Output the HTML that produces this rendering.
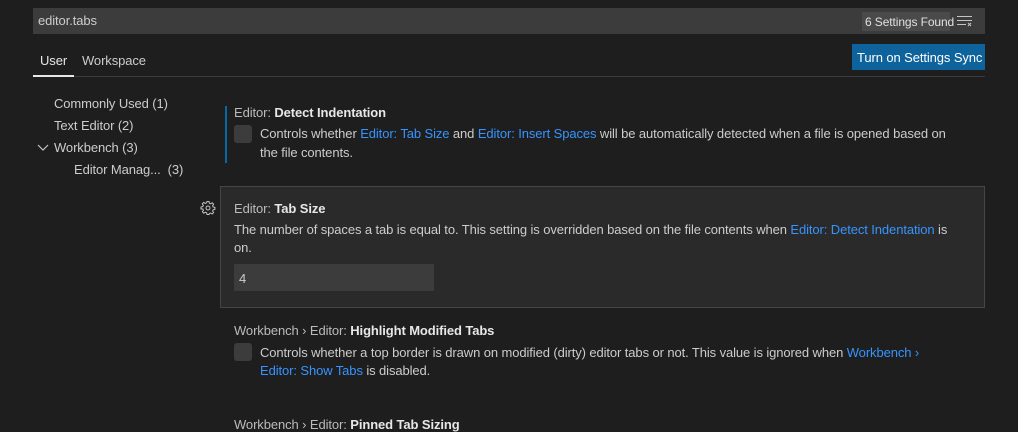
<!DOCTYPE html>
<html><head><style>
*{margin:0;padding:0;box-sizing:border-box}
body{width:1018px;height:422px;background:#1e1e1e;font-family:"Liberation Sans",sans-serif;font-size:13px;color:#cccccc;position:relative;overflow:hidden;letter-spacing:-0.1px}
.a{position:absolute;white-space:nowrap}
.l{color:#3794ff}
b{color:#e7e7e7}
.t{color:#bbbbbb}
.cb{position:absolute;width:18px;height:18px;background:#3c3c3c;border-radius:3px}
</style></head><body>
<div class="a" style="left:33px;top:8px;width:952px;height:26px;background:#3c3c3c"></div>
<div class="a" style="left:38px;top:13px;color:#cccccc">editor.tabs</div>
<div class="a" style="left:862px;top:12px;width:88px;height:19px;background:#4a4a4a"></div>
<div class="a" style="left:865px;top:15px;font-size:12px;color:#e0e0e0">6 Settings Found</div>
<svg class="a" style="left:956px;top:14px" width="18" height="14"><g stroke="#c5c5c5" stroke-width="1"><line x1="1" y1="2.5" x2="16" y2="2.5"/><line x1="1" y1="6.5" x2="16" y2="6.5"/><line x1="1" y1="10.5" x2="10" y2="10.5"/><line x1="12" y1="9" x2="15" y2="12"/><line x1="15" y1="9" x2="12" y2="12"/></g></svg>
<div class="a" style="left:40px;top:53px;color:#e7e7e7">User</div>
<div class="a" style="left:82px;top:53px">Workspace</div>
<div class="a" style="left:33px;top:76px;width:952px;height:1px;background:#3c3c3c"></div>
<div class="a" style="left:33px;top:75px;width:41px;height:2px;background:#e7e7e7"></div>
<div class="a" style="left:852px;top:44px;width:133px;height:26px;background:#0e639c"></div>
<div class="a" style="left:857px;top:50px;color:#fff">Turn on Settings Sync</div>
<div class="a" style="left:54px;top:96px">Commonly Used <span>(1)</span></div>
<div class="a" style="left:54px;top:118px">Text Editor (2)</div>
<svg class="a" style="left:37px;top:143px" width="12" height="10"><path d="M1 2 L6 7 L11 2" stroke="#c5c5c5" fill="none" stroke-width="1.2"/></svg>
<div class="a" style="left:54px;top:140px">Workbench (3)</div>
<div class="a" style="left:74px;top:162px">Editor Manag...&nbsp;&nbsp;(3)</div>

<div class="a" style="left:225px;top:106px;width:2px;height:57px;background:#007acc;opacity:.8"></div>
<div class="a" style="left:234px;top:105px"><span class="t">Editor: </span><b>Detect Indentation</b></div>
<div class="cb" style="left:234px;top:125px"></div>
<div class="a" style="left:260px;top:126px">Controls whether <span class="l">Editor: Tab Size</span> and <span class="l">Editor: Insert Spaces</span> will be automatically detected when a file is opened based on</div>
<div class="a" style="left:260px;top:145px">the file contents.</div>

<div class="a" style="left:220px;top:186px;width:765px;height:122px;background:#2a2a2a;border:1px solid #454545"></div>
<svg class="a" style="left:200px;top:200px" width="16" height="16" viewBox="0 0 16 16"><path d="M7 1.5h2l.4 1.8 1.2.5 1.6-1 1.4 1.4-1 1.6.5 1.2 1.8.4v2l-1.8.4-.5 1.2 1 1.6-1.4 1.4-1.6-1-1.2.5L9 14.5H7l-.4-1.8-1.2-.5-1.6 1-1.4-1.4 1-1.6-.5-1.2L1 9V7l1.8-.4.5-1.2-1-1.6 1.4-1.4 1.6 1 1.2-.5z" fill="none" stroke="#c5c5c5" stroke-width="1"/><circle cx="8" cy="8" r="2" fill="none" stroke="#c5c5c5"/></svg>
<div class="a" style="left:234px;top:201px"><span class="t">Editor: </span><b>Tab Size</b></div>
<div class="a" style="left:234px;top:222px">The number of spaces a tab is equal to. This setting is overridden based on the file contents when <span class="l">Editor: Detect Indentation</span> is</div>
<div class="a" style="left:234px;top:240px">on.</div>
<div class="a" style="left:234px;top:264px;width:200px;height:27px;background:#3c3c3c"></div>
<div class="a" style="left:239px;top:271px">4</div>

<div class="a" style="left:234px;top:323px"><span class="t">Workbench › Editor: </span><b>Highlight Modified Tabs</b></div>
<div class="cb" style="left:234px;top:343px"></div>
<div class="a" style="left:260px;top:345px">Controls whether a top border is drawn on modified (dirty) editor tabs or not. This value is ignored when <span class="l">Workbench ›</span></div>
<div class="a" style="left:260px;top:363px"><span class="l">Editor: Show Tabs</span> is disabled.</div>
<div class="a" style="left:234px;top:417px"><span class="t">Workbench › Editor: </span><b>Pinned Tab Sizing</b></div>
</body></html>
